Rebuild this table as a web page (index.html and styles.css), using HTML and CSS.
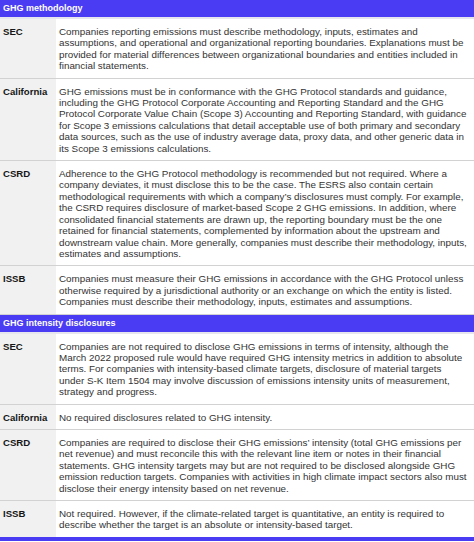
FILE: index.html
```html
<!DOCTYPE html>
<html>
<head>
<meta charset="utf-8">
<link rel="stylesheet" href="styles.css">
</head>
<body>
<div class="table">
  <div class="head">GHG methodology</div>
  <div class="row">
    <div class="label">SEC</div>
    <div class="text">Companies reporting emissions must describe methodology, inputs, estimates and<br>assumptions, and operational and organizational reporting boundaries. Explanations must be<br>provided for material differences between organizational boundaries and entities included in<br>financial statements.</div>
  </div>
  <div class="row">
    <div class="label">California</div>
    <div class="text">GHG emissions must be in conformance with the GHG Protocol standards and guidance,<br>including the GHG Protocol Corporate Accounting and Reporting Standard and the GHG<br>Protocol Corporate Value Chain (Scope 3) Accounting and Reporting Standard, with guidance<br>for Scope 3 emissions calculations that detail acceptable use of both primary and secondary<br>data sources, such as the use of industry average data, proxy data, and other generic data in<br>its Scope 3 emissions calculations.</div>
  </div>
  <div class="row">
    <div class="label">CSRD</div>
    <div class="text">Adherence to the GHG Protocol methodology is recommended but not required. Where a<br>company deviates, it must disclose this to be the case. The ESRS also contain certain<br>methodological requirements with which a company’s disclosures must comply. For example,<br>the CSRD requires disclosure of market-based Scope 2 GHG emissions. In addition, where<br>consolidated financial statements are drawn up, the reporting boundary must be the one<br>retained for financial statements, complemented by information about the upstream and<br>downstream value chain. More generally, companies must describe their methodology, inputs,<br>estimates and assumptions.</div>
  </div>
  <div class="row">
    <div class="label">ISSB</div>
    <div class="text">Companies must measure their GHG emissions in accordance with the GHG Protocol unless<br>otherwise required by a jurisdictional authority or an exchange on which the entity is listed.<br>Companies must describe their methodology, inputs, estimates and assumptions.</div>
  </div>
  <div class="head">GHG intensity disclosures</div>
  <div class="row">
    <div class="label">SEC</div>
    <div class="text">Companies are not required to disclose GHG emissions in terms of intensity, although the<br>March 2022 proposed rule would have required GHG intensity metrics in addition to absolute<br>terms. For companies with intensity-based climate targets, disclosure of material targets<br>under S-K Item 1504 may involve discussion of emissions intensity units of measurement,<br>strategy and progress.</div>
  </div>
  <div class="row">
    <div class="label">California</div>
    <div class="text">No required disclosures related to GHG intensity.</div>
  </div>
  <div class="row">
    <div class="label">CSRD</div>
    <div class="text">Companies are required to disclose their GHG emissions’ intensity (total GHG emissions per<br>net revenue) and must reconcile this with the relevant line item or notes in their financial<br>statements. GHG intensity targets may but are not required to be disclosed alongside GHG<br>emission reduction targets. Companies with activities in high climate impact sectors also must<br>disclose their energy intensity based on net revenue.</div>
  </div>
  <div class="row last">
    <div class="label">ISSB</div>
    <div class="text">Not required. However, if the climate-related target is quantitative, an entity is required to<br>describe whether the target is an absolute or intensity-based target.</div>
  </div>
</div>
</body>
</html>
```
FILE: styles.css
```css
html, body {
  margin: 0;
  padding: 0;
  background: #ffffff;
}
body {
  font-family: "Liberation Sans", Arial, sans-serif;
  font-size: 9.85px;
  line-height: 11.4px;
  color: #333333;
}
.table {
  width: 474px;
  border-bottom: 4px solid #4a3cf3;
}
.head {
  height: 17px;
  line-height: 17px;
  background: #4a3cf3;
  color: #ffffff;
  font-weight: 700;
  font-size: 9px;
  padding-left: 3px;
  border-bottom: 2px solid #e6e6ee;
}
.row {
  display: grid;
  grid-template-columns: 56px 1fr;
  border-bottom: 1px solid #d2d2d2;
}
.row.last {
  border-bottom: none;
}
.label {
  background: #f1f1f1;
  padding: 7px 3px 6px;
  font-weight: 700;
  font-size: 9.6px;
  color: #161616;
}
.text {
  padding: 7px 2px 6px 3px;
  white-space: nowrap;
}
```
